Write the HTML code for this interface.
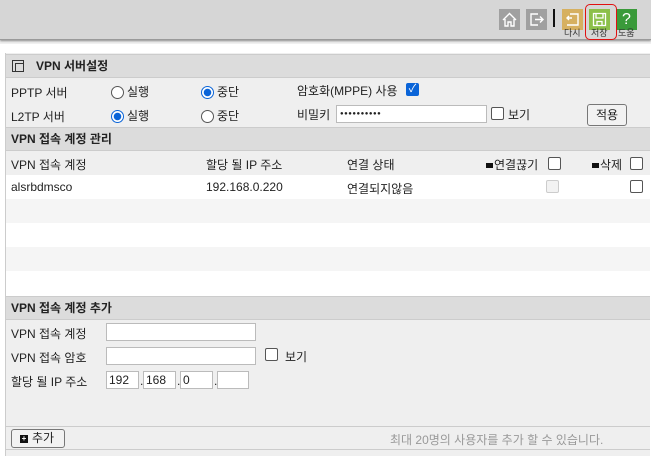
<!DOCTYPE html>
<html><head><meta charset="utf-8"><style>
*{margin:0;padding:0;box-sizing:border-box}
body{width:651px;height:456px;overflow:hidden;background:#f0f0f0;font-family:"Liberation Sans","Noto Sans CJK KR",sans-serif;font-size:12px;color:#222;position:relative}
.a{position:absolute;white-space:nowrap}
.top{left:0;top:0;width:651px;height:40px;background:#d6d6d6;border-bottom:1px solid #9a9a9a;box-shadow:0 1px 2px #888}
.panel{left:5px;top:53px;width:645px;height:403px;background:#efefef;border-left:1px solid #ccc}
.hd{left:6px;width:644px;height:24px;background:#dcdcdc;border-top:1px solid #ccc;border-bottom:1px solid #ccc;font-weight:bold;font-size:12px;line-height:22px;padding-left:5px}
.rad{width:13px;height:13px;border-radius:50%;border:1px solid #555;background:#fff}
.rad.on{border:1px solid #0a64d8;background:radial-gradient(circle,#0a64d8 0 3.5px,#fff 4px)}
.cb{width:13px;height:13px;border:1px solid #555;border-radius:2px;background:#fff}
.inp{height:18px;background:#fff;border:1px solid #bbb}
.ic{width:21px;height:21px}
.mk{display:inline-block;width:7px;height:5px;background:#111;vertical-align:middle;margin-right:1px}
</style></head><body>
<div class="a top"></div>
<div class="a ic" style="left:499px;top:9px;background:#a0a0a0"><svg width="21" height="21"><path d="M4 11 L10.5 4.5 L17 11 M6 10 V17 H9 V13 H12 V17 H15 V10" fill="none" stroke="#fff" stroke-width="1.4"/></svg></div>
<div class="a ic" style="left:526px;top:9px;background:#a0a0a0"><svg width="21" height="21"><path d="M12 5 H5 V16 H12 M9 10.5 H17 M14 7.5 L17 10.5 L14 13.5" fill="none" stroke="#fff" stroke-width="1.4"/></svg></div>
<div class="a" style="left:553px;top:9px;width:2px;height:18px;background:#111"></div>
<div class="a ic" style="left:562px;top:9px;background:#d6b060"><svg width="21" height="21"><path d="M8 5 H16 V16 H5 M5 9 H10 M7 7 L5 9 L7 11" fill="none" stroke="#fff" stroke-width="1.4"/></svg></div>
<div class="a ic" style="left:589px;top:9px;background:#8cc04a"><svg width="21" height="21"><path d="M4.5 4.5 H16.5 V16.5 H4.5 Z M7 4.5 V9 H14 V4.5 M8 16.5 V12.5 H13 V16.5" fill="none" stroke="#fff" stroke-width="1.3"/></svg></div>
<div class="a ic" style="left:616px;top:9px;background:#3a9a3a;color:#fff;font-size:16px;text-align:center;line-height:21px">?</div>
<div class="a" style="left:564px;top:26px;font-size:9px;color:#333">다시</div>
<div class="a" style="left:591px;top:26px;font-size:9px;color:#333">저장</div>
<div class="a" style="left:618px;top:26px;font-size:9px;color:#333">도움</div>
<div class="a" style="left:585px;top:4px;width:32px;height:36px;border:1.5px solid #e01010;border-radius:5px"></div>

<div class="a" style="left:0;top:44px;width:651px;height:412px;background:#fff"></div>
<div class="a panel"></div>
<div class="a hd" style="top:54px;padding-left:30px">VPN 서버설정</div>
<div class="a" style="left:12px;top:60px;width:12px;height:12px;border:1.5px solid #333"></div>
<div class="a" style="left:15px;top:63px;width:9px;height:9px;border:1.5px solid #333;background:#dcdcdc"></div>
<div class="a" style="left:11px;top:84px">PPTP 서버</div>
<div class="a rad" style="left:111px;top:86px"></div><div class="a" style="left:127px;top:83px">실행</div>
<div class="a rad on" style="left:201px;top:86px"></div><div class="a" style="left:217px;top:83px">중단</div>
<div class="a" style="left:297px;top:82px">암호화(MPPE) 사용</div>
<div class="a" style="left:406px;top:83px;width:13px;height:13px;background:#0a64d8;border-radius:2px;color:#fff;font-size:11px;line-height:13px;text-align:center">✓</div>
<div class="a" style="left:11px;top:108px">L2TP 서버</div>
<div class="a rad on" style="left:111px;top:110px"></div><div class="a" style="left:127px;top:107px">실행</div>
<div class="a rad" style="left:201px;top:110px"></div><div class="a" style="left:217px;top:107px">중단</div>
<div class="a" style="left:297px;top:106px">비밀키</div>
<div class="a inp" style="left:336px;top:105px;width:151px;font-size:6px;line-height:16px;padding-left:3px;letter-spacing:0.5px">●●●●●●●●●●</div>
<div class="a cb" style="left:491px;top:107px"></div><div class="a" style="left:508px;top:106px">보기</div>
<div class="a" style="left:587px;top:104px;width:40px;height:22px;border:1px solid #777;border-radius:3px;background:#f2f2f2;text-align:center;line-height:20px">적용</div>

<div class="a hd" style="top:127px">VPN 접속 계정 관리</div>
<div class="a" style="left:11px;top:156px">VPN 접속 계정</div>
<div class="a" style="left:206px;top:156px">할당 될 IP 주소</div>
<div class="a" style="left:347px;top:156px">연결 상태</div>
<div class="a" style="left:486px;top:156px"><span class="mk"></span>연결끊기</div>
<div class="a cb" style="left:548px;top:157px"></div>
<div class="a" style="left:592px;top:156px"><span class="mk"></span>삭제</div>
<div class="a cb" style="left:630px;top:157px"></div>
<div class="a" style="left:6px;top:175px;width:644px;height:24px;background:#fff"></div>
<div class="a" style="left:6px;top:199px;width:644px;height:24px;background:#f5f5f5"></div>
<div class="a" style="left:6px;top:223px;width:644px;height:24px;background:#fff"></div>
<div class="a" style="left:6px;top:247px;width:644px;height:24px;background:#f5f5f5"></div>
<div class="a" style="left:6px;top:271px;width:644px;height:25px;background:#fff"></div>
<div class="a" style="left:11px;top:180px">alsrbdmsco</div>
<div class="a" style="left:206px;top:180px">192.168.0.220</div>
<div class="a" style="left:347px;top:180px">연결되지않음</div>
<div class="a cb" style="left:546px;top:180px;border-color:#ccc;background:#f2f2f2"></div>
<div class="a cb" style="left:630px;top:180px"></div>

<div class="a hd" style="top:296px">VPN 접속 계정 추가</div>
<div class="a" style="left:11px;top:325px">VPN 접속 계정</div>
<div class="a inp" style="left:106px;top:323px;width:150px"></div>
<div class="a" style="left:11px;top:349px">VPN 접속 암호</div>
<div class="a inp" style="left:106px;top:347px;width:150px"></div>
<div class="a cb" style="left:265px;top:348px"></div><div class="a" style="left:285px;top:348px">보기</div>
<div class="a" style="left:11px;top:373px">할당 될 IP 주소</div>
<div class="a inp" style="left:106px;top:371px;width:33px;padding-left:2px;line-height:16px">192</div><div class="a" style="left:140px;top:374px">.</div>
<div class="a inp" style="left:143px;top:371px;width:33px;padding-left:2px;line-height:16px">168</div><div class="a" style="left:177px;top:374px">.</div>
<div class="a inp" style="left:180px;top:371px;width:33px;padding-left:2px;line-height:16px">0</div><div class="a" style="left:214px;top:374px">.</div>
<div class="a inp" style="left:217px;top:371px;width:32px"></div>
<div class="a" style="left:6px;top:426px;width:644px;height:1px;background:#ccc"></div>
<div class="a" style="left:6px;top:449px;width:644px;height:1px;background:#ccc"></div>
<div class="a" style="left:11px;top:429px;width:54px;height:19px;border:1px solid #777;border-radius:3px;background:#f2f2f2;line-height:17px;padding-left:20px">추가</div>
<div class="a" style="left:20px;top:435px;width:8px;height:8px;background:#111;color:#fff;font-size:8px;line-height:8px;text-align:center;font-weight:bold">+</div>
<div class="a" style="left:390px;top:431px;color:#999">최대 20명의 사용자를 추가 할 수 있습니다.</div>
</body></html>
